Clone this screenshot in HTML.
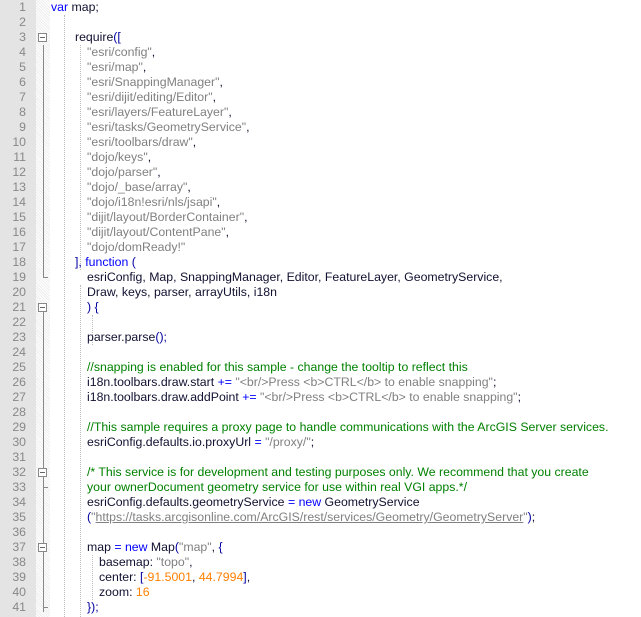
<!DOCTYPE html>
<html><head><meta charset="utf-8"><style>
body{margin:0;width:641px;height:617px;overflow:hidden;background:#fff;font-family:"Liberation Sans",sans-serif;font-size:12.3px;}
#g{position:absolute;left:0;top:0;width:36px;height:617px;background:#e4e4e4;}
#d{position:absolute;left:36px;top:0;width:14px;height:617px;background:repeating-linear-gradient(45deg,#eee 0 1px,#fff 1px 2px);}
.n{position:absolute;left:0;width:26px;text-align:right;color:#888;height:15px;line-height:15px;}
.l{position:absolute;white-space:pre;height:15px;line-height:15px;color:#101030;}
.k{color:#0000ff}.s{color:#808080}.c{color:#008000}.o{color:#ff8000}.b{color:#0000a0}
.box{position:absolute;left:38px;width:9px;height:9px;border:1px solid #888;background:#fff;box-sizing:border-box;}
.box:after{content:"";position:absolute;left:1px;top:3px;width:5px;height:1px;background:#666}
.v{position:absolute;left:43px;width:1px;background:#888}
.h{position:absolute;left:43px;width:5px;height:1px;background:#888}
.gd{position:absolute;width:0;border-left:1px dotted #bbb}
</style></head><body>
<div id="g"></div><div id="d"></div>
<div class="v" style="top:45px;height:232px"></div><div class="h" style="top:277px"></div>
<div class="box" style="top:33px"></div>
<div class="box" style="top:303px"></div>
<div class="v" style="top:312px;height:300px"></div>
<div class="box" style="top:468px"></div>
<div class="box" style="top:543px"></div>
<div class="h" style="top:487px"></div>
<div class="h" style="top:607px"></div>
<div class="gd" style="left:64px;top:15px;height:602px"></div>
<div class="gd" style="left:80px;top:45px;height:225px"></div>
<div class="gd" style="left:80px;top:285px;height:332px"></div>
<div class="gd" style="left:92px;top:315px;height:30px"></div>
<div class="gd" style="left:92px;top:555px;height:45px"></div>
<div id="nums"></div>
<script>
var nums='';for(var i=1;i<=41;i++)nums+='<div class="n" style="top:'+(15*(i-1))+'px">'+i+'</div>';
document.getElementById('nums').innerHTML=nums;
</script>
<div class="l" style="left:51px;top:0px"><span class="k">var</span> map;</div>
<div class="l" style="left:75px;top:30px">require<span class="b">([</span></div>
<div class="l" style="left:87px;top:45px"><span class="s">"esri/config"</span>,</div>
<div class="l" style="left:87px;top:60px"><span class="s">"esri/map"</span>,</div>
<div class="l" style="left:87px;top:75px"><span class="s">"esri/SnappingManager"</span>,</div>
<div class="l" style="left:87px;top:90px"><span class="s">"esri/dijit/editing/Editor"</span>,</div>
<div class="l" style="left:87px;top:105px"><span class="s">"esri/layers/FeatureLayer"</span>,</div>
<div class="l" style="left:87px;top:120px"><span class="s">"esri/tasks/GeometryService"</span>,</div>
<div class="l" style="left:87px;top:135px"><span class="s">"esri/toolbars/draw"</span>,</div>
<div class="l" style="left:87px;top:150px"><span class="s">"dojo/keys"</span>,</div>
<div class="l" style="left:87px;top:165px"><span class="s">"dojo/parser"</span>,</div>
<div class="l" style="left:87px;top:180px"><span class="s">"dojo/_base/array"</span>,</div>
<div class="l" style="left:87px;top:195px"><span class="s">"dojo/i18n!esri/nls/jsapi"</span>,</div>
<div class="l" style="left:87px;top:210px"><span class="s">"dijit/layout/BorderContainer"</span>,</div>
<div class="l" style="left:87px;top:225px"><span class="s">"dijit/layout/ContentPane"</span>,</div>
<div class="l" style="left:87px;top:240px"><span class="s">"dojo/domReady!"</span></div>
<div class="l" style="left:75px;top:255px"><span class="b">],</span> <span class="k">function</span> <span class="b">(</span></div>
<div class="l" style="left:87px;top:270px">esriConfig, Map, SnappingManager, Editor, FeatureLayer, GeometryService,</div>
<div class="l" style="left:87px;top:285px">Draw, keys, parser, arrayUtils, i18n</div>
<div class="l" style="left:87px;top:300px"><span class="b">) {</span></div>
<div class="l" style="left:87px;top:330px">parser.parse<span class="b">();</span></div>
<div class="l" style="left:87px;top:360px"><span class="c">//snapping is enabled for this sample - change the tooltip to reflect this</span></div>
<div class="l" style="left:87px;top:375px">i18n.toolbars.draw.start <span class="k">+=</span> <span class="s">"&lt;br/&gt;Press &lt;b&gt;CTRL&lt;/b&gt; to enable snapping"</span>;</div>
<div class="l" style="left:87px;top:390px">i18n.toolbars.draw.addPoint <span class="k">+=</span> <span class="s">"&lt;br/&gt;Press &lt;b&gt;CTRL&lt;/b&gt; to enable snapping"</span>;</div>
<div class="l" style="left:87px;top:420px"><span class="c">//This sample requires a proxy page to handle communications with the ArcGIS Server services.</span></div>
<div class="l" style="left:87px;top:435px">esriConfig.defaults.io.proxyUrl <span class="k">=</span> <span class="s">"/proxy/"</span>;</div>
<div class="l" style="left:87px;top:465px"><span class="c">/* This service is for development and testing purposes only. We recommend that you create</span></div>
<div class="l" style="left:87px;top:480px"><span class="c">your ownerDocument geometry service for use within real VGI apps.*/</span></div>
<div class="l" style="left:87px;top:495px">esriConfig.defaults.geometryService <span class="k">=</span> <span class="k">new</span> GeometryService</div>
<div class="l" style="left:87px;top:510px"><span class="b">(</span><span class="s">"<u>https://tasks.arcgisonline.com/ArcGIS/rest/services/Geometry/GeometryServer</u>"</span><span class="b">)</span>;</div>
<div class="l" style="left:87px;top:540px">map <span class="k">=</span> <span class="k">new</span> Map<span class="b">(</span><span class="s">"map"</span>, <span class="b">{</span></div>
<div class="l" style="left:99px;top:555px">basemap: <span class="s">"topo"</span>,</div>
<div class="l" style="left:99px;top:570px">center: <span class="b">[</span><span class="o">-91.5001</span>, <span class="o">44.7994</span><span class="b">]</span>,</div>
<div class="l" style="left:99px;top:585px">zoom: <span class="o">16</span></div>
<div class="l" style="left:87px;top:600px"><span class="b">});</span></div>
</body></html>
